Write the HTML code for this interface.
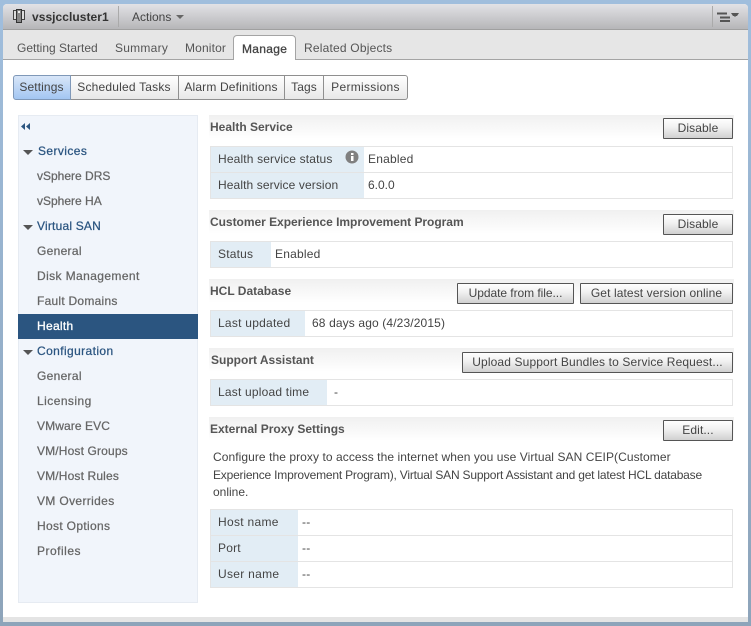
<!DOCTYPE html>
<html><head><meta charset="utf-8"><style>
html,body{margin:0;padding:0}
body{width:751px;height:626px;overflow:hidden;position:relative;background:linear-gradient(#a0bedd,#8da4ba);font:12px "Liberation Sans",sans-serif;color:#444}
div{position:absolute;box-sizing:border-box;white-space:nowrap}
.t{line-height:14px;height:14px;letter-spacing:.2px}
.nav{color:#666;font-weight:normal;left:37px;-webkit-text-stroke:.25px #666;letter-spacing:.3px}
.hd{color:#2b5580;-webkit-text-stroke:.25px #2b5580;letter-spacing:.4px}
.tri{width:0;height:0;border-left:5px solid transparent;border-right:5px solid transparent;border-top:5px solid #555;left:23px}
.sec{left:209px;width:525px;height:24px;background:linear-gradient(#f0f0f0,#fff)}
.h{left:210px;font-weight:bold;color:#555;line-height:14px;height:14px}
.btn{height:21px;border:1px solid #555;border-radius:1px;background:linear-gradient(#fff,#f0f0f0 45%,#d0d0d0);text-align:center;line-height:19px;color:#444;letter-spacing:.1px}
.tbl{left:210px;width:523px;border:1px solid #e4e4e4;background:#fff}
.lab{left:0;top:0;background:#e2edf5;height:100%}
.line{left:0;right:0;height:1px;background:#e4e4e4}
.sg{top:75px;height:25px;border:1px solid #8f8f8f;border-left:0;background:linear-gradient(#fff,#e8e8e8);text-align:center;line-height:23px;color:#444;letter-spacing:.2px}
</style></head><body>
<div style="left:3px;top:4px;width:745px;height:618px;background:#fff;border-radius:4px 4px 0 0;overflow:hidden">
<div style="left:0;top:0;width:745px;height:26px;background:linear-gradient(#e2e2e6,#b6b6b8);border-bottom:1px solid #a0a0a0"></div>
<div style="left:0;top:26px;width:745px;height:30px;background:#e6e6e6;border-bottom:1px solid #a4a4a4"></div>
<div style="left:0;top:613px;width:745px;height:5px;background:#e4e4e4"></div>
</div>
<div style="left:118px;top:6px;width:1px;height:21px;background:#aaa"></div>
<div style="left:712px;top:6px;width:1px;height:21px;background:#aaa"></div>
<svg style="position:absolute;left:12px;top:8px" width="14" height="16" viewBox="0 0 14 16"><rect x="1.500" y="2.500" width="3" height="9" fill="#ddd" stroke="#444"/><rect x="9.500" y="2.500" width="3" height="9" fill="#ddd" stroke="#444"/><rect x="4.500" y="1.500" width="5" height="13" fill="#888" stroke="#333"/><rect x="6" y="3" width="2" height="2" fill="#eee"/></svg>
<div class="t" style="left:32px;top:10px;color:#333;font-weight:bold;letter-spacing:.05px">vssjccluster1</div>
<div class="t" style="left:132px;top:10px;color:#444;letter-spacing:0">Actions</div>
<div style="left:176px;top:15px;width:0;height:0;border-left:4px solid transparent;border-right:4px solid transparent;border-top:4px solid #666"></div>
<svg style="position:absolute;left:716px;top:12px" width="23" height="10"><path d="M1 .5h10v2H1zM4 4.500h10v2H4zM4 8h10v2H4z" fill="#555"/><path d="M15 1h8l-2 3h-1l-1 1-1-1h-1z" fill="#555"/></svg>
<div class="t" style="left:17px;top:41px;color:#555;letter-spacing:0">Getting Started</div>
<div class="t" style="left:115px;top:41px;color:#555;letter-spacing:.25px">Summary</div>
<div class="t" style="left:185px;top:41px;color:#555;letter-spacing:.15px">Monitor</div>
<div style="left:233px;top:35px;width:63px;height:25px;background:#fff;border:1px solid #a4a4a4;border-bottom:0;border-radius:4px 4px 0 0"></div>
<div class="t" style="left:242px;top:42px;color:#444;-webkit-text-stroke:.3px #444;letter-spacing:.3px">Manage</div>
<div class="t" style="left:304px;top:41px;color:#555;letter-spacing:.2px">Related Objects</div>

<div class="sg" style="left:13px;width:58px;border:1px solid #7f98b8;border-radius:3px 0 0 3px;background:linear-gradient(#d8e6f8,#a3c6f2);letter-spacing:.1px;text-indent:-1px">Settings</div>
<div class="sg" style="left:71px;width:108px;text-indent:-1px">Scheduled Tasks</div>
<div class="sg" style="left:179px;width:106px;letter-spacing:.15px;text-indent:-1px">Alarm Definitions</div>
<div class="sg" style="left:285px;width:39px;letter-spacing:.1px">Tags</div>
<div class="sg" style="left:324px;width:84px;border-radius:0 3px 3px 0;letter-spacing:.3px">Permissions</div>

<div style="left:18px;top:115px;width:180px;height:488px;background:#f1f5fb;border:1px solid #e6ebf2"></div>
<svg style="position:absolute;left:21px;top:122px" width="10" height="9"><path d="M0 4.500L4 1v7zM5 4.500L9 1v7z" fill="#2b5580"/></svg>
<div class="tri" style="top:150px"></div><div class="t nav hd" style="left:38px;top:144px">Services</div>
<div class="t nav" style="top:169px;letter-spacing:0">vSphere DRS</div>
<div class="t nav" style="top:194px;letter-spacing:0">vSphere HA</div>
<div class="tri" style="top:225px"></div><div class="t nav hd" style="top:219px;letter-spacing:.2px">Virtual SAN</div>
<div class="t nav" style="top:244px">General</div>
<div class="t nav" style="top:269px;letter-spacing:.4px">Disk Management</div>
<div class="t nav" style="top:294px;letter-spacing:.25px">Fault Domains</div>
<div style="left:18px;top:314px;width:180px;height:25px;background:#2b5580"></div>
<div class="t nav" style="top:319px;color:#fff;-webkit-text-stroke:.3px #fff">Health</div>
<div class="tri" style="top:350px"></div><div class="t nav hd" style="top:344px">Configuration</div>
<div class="t nav" style="top:369px">General</div>
<div class="t nav" style="top:394px;letter-spacing:.45px">Licensing</div>
<div class="t nav" style="top:419px;letter-spacing:.1px">VMware EVC</div>
<div class="t nav" style="top:444px;letter-spacing:.15px">VM/Host Groups</div>
<div class="t nav" style="top:469px;letter-spacing:.15px">VM/Host Rules</div>
<div class="t nav" style="top:494px;letter-spacing:.35px">VM Overrides</div>
<div class="t nav" style="top:519px;letter-spacing:.33px">Host Options</div>
<div class="t nav" style="top:544px;letter-spacing:.5px">Profiles</div>

<div class="sec" style="top:115px"></div>
<div class="h" style="top:120px">Health Service</div>
<div class="btn" style="left:663px;top:118px;width:70px">Disable</div>
<div class="tbl" style="top:146px;height:53px"><div class="lab" style="width:153px"></div><div class="line" style="top:25px"></div></div>
<div class="t" style="left:218px;top:152px;letter-spacing:.15px">Health service status</div>
<svg style="position:absolute;left:345px;top:150px" width="14" height="14"><circle cx="7" cy="7" r="6.500" fill="#808080"/><rect x="6" y="6" width="2.500" height="5" fill="#fff"/><rect x="6" y="3" width="2.500" height="2" fill="#fff"/></svg>
<div class="t" style="left:368px;top:152px">Enabled</div>
<div class="t" style="left:218px;top:178px;letter-spacing:.1px">Health service version</div>
<div class="t" style="left:368px;top:178px;letter-spacing:0">6.0.0</div>

<div class="sec" style="top:210px"></div>
<div class="h" style="top:215px;letter-spacing:-.03px">Customer Experience Improvement Program</div>
<div class="btn" style="left:663px;top:214px;width:70px">Disable</div>
<div class="tbl" style="top:241px;height:27px"><div class="lab" style="width:60px"></div></div>
<div class="t" style="left:218px;top:247px">Status</div>
<div class="t" style="left:275px;top:247px">Enabled</div>

<div class="sec" style="top:279px"></div>
<div class="h" style="top:284px">HCL Database</div>
<div class="btn" style="left:457px;top:283px;width:117px;letter-spacing:-.05px">Update from file...</div>
<div class="btn" style="left:580px;top:283px;width:153px;letter-spacing:.1px">Get latest version online</div>
<div class="tbl" style="top:310px;height:27px"><div class="lab" style="width:94px"></div></div>
<div class="t" style="left:218px;top:316px;letter-spacing:.25px">Last updated</div>
<div class="t" style="left:312px;top:316px;letter-spacing:.13px">68 days ago (4/23/2015)</div>

<div class="sec" style="top:348px"></div>
<div class="h" style="left:211px;top:353px">Support Assistant</div>
<div class="btn" style="left:462px;top:352px;width:271px;letter-spacing:.13px">Upload Support Bundles to Service Request...</div>
<div class="tbl" style="top:379px;height:27px"><div class="lab" style="width:116px"></div></div>
<div class="t" style="left:218px;top:385px">Last upload time</div>
<div class="t" style="left:334px;top:385px">-</div>

<div class="sec" style="top:417px"></div>
<div class="h" style="top:422px">External Proxy Settings</div>
<div class="btn" style="left:663px;top:420px;width:70px">Edit...</div>
<div class="t" style="left:213px;top:450px;letter-spacing:.07px">Configure the proxy to access the internet when you use Virtual SAN CEIP(Customer</div>
<div class="t" style="left:213px;top:468px;letter-spacing:-.2px">Experience Improvement Program), Virtual SAN Support Assistant and get latest HCL database</div>
<div class="t" style="left:213px;top:485px;letter-spacing:0">online.</div>
<div class="tbl" style="top:509px;height:79px"><div class="lab" style="width:87px"></div><div class="line" style="top:25px"></div><div class="line" style="top:51px"></div></div>
<div class="t" style="left:218px;top:515px;letter-spacing:.3px">Host name</div><div class="t" style="left:302px;top:515px">--</div>
<div class="t" style="left:218px;top:541px">Port</div><div class="t" style="left:302px;top:541px">--</div>
<div class="t" style="left:218px;top:567px;letter-spacing:.3px">User name</div><div class="t" style="left:302px;top:567px">--</div>
</body></html>
